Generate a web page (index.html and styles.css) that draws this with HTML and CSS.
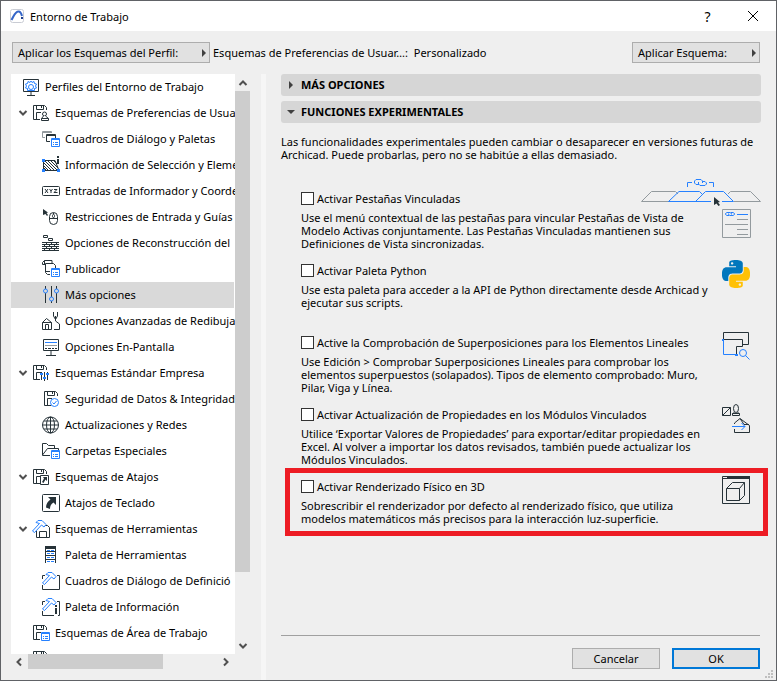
FILE: index.html
```html
<!DOCTYPE html>
<html lang="es">
<head>
<meta charset="utf-8">
<title>Entorno de Trabajo</title>
<link rel="stylesheet" href="styles.css">
</head>
<body>
<svg class="sprite" aria-hidden="true">
  <defs>
    <symbol id="floppy" viewBox="0 0 20 20">
      <path class="k" d="M8 16.5H1.500V2.500H12.500L14.500 4.500V7M4.500 2.500V6.500H11.500V2.500M9.500 3V5M4.500 16V9.500H9"/>
    </symbol>
    <symbol id="list-badge" viewBox="0 0 20 20">
      <path class="b w" d="M9.500 9.500H17.500V17.500H9.500Z"/>
      <path class="b" d="M9.500 10.500H17.500M11 13.500H12M13 13.500H16M11 15.500H12M13 15.500H16"/>
    </symbol>
    <symbol id="hammer" viewBox="0 0 20 20">
      <path class="b w" d="M4 3.500L6 1.500H10L14 5.500L12 8L9.500 6L2.500 13.500L.500 12L7.500 4.500Z"/>
    </symbol>
    <symbol id="chevron" viewBox="0 0 10 10">
      <path class="chev" d="M1.500 3L5 6.500L8.500 3"/>
    </symbol>
    <symbol id="wedge" viewBox="0 0 8 8"><path d="M2 0L6 4L2 8Z"/></symbol>
  </defs>
</svg>

<header class="titlebar">
  <svg class="app-icon" width="14" height="14" viewBox="0 0 14 14">
    <rect class="app-frame" x=".5" y=".5" width="13" height="13" rx="2"/>
    <path class="app-arc" d="M1.500 11C4 7 5 2 9 2.500C11 3 11.500 5 12 7"/>
    <rect class="app-dot" x="11" y="8" width="2" height="2"/>
  </svg>
  <h1>Entorno de Trabajo</h1>
  <button class="win-btn" type="button" aria-label="Ayuda">?</button>
  <button class="win-btn" type="button" aria-label="Cerrar">
    <svg width="12" height="12" viewBox="0 0 12 12"><path class="close" d="M1 1L11 11M11 1L1 11"/></svg>
  </button>
</header>

<div class="toolbar">
  <button class="btn menu-btn profile-btn" type="button">Aplicar los Esquemas del Perfil:<svg width="8" height="8"><use href="#wedge"/></svg></button>
  <span class="scheme">Esquemas de Preferencias de Usuar…:&nbsp; Personalizado</span>
  <button class="btn menu-btn scheme-btn" type="button">Aplicar Esquema:<svg width="8" height="8"><use href="#wedge"/></svg></button>
</div>

<main class="main">
  <nav class="nav" aria-label="Esquemas">
    <ul class="tree">
      <li class="row l0"><svg class="ic" viewBox="0 0 20 20"><path class="k" d="M1.500 2.500H16.500V14.500H1.500ZM9 15V18M5 18.500H13"/><path class="b w" d="M9 4L10 5.500L12 4.500L12.500 6.500L14.500 7L13.500 9L14.500 11L12.500 11.500V13.500H5.500V11.500L3.500 11L4.500 9L3.500 7L5.500 6.500L6 4.500L8 5.500Z"/><circle class="b" cx="9" cy="10" r="2.500"/></svg>Perfiles del Entorno de Trabajo</li>
      <li class="row l1"><svg class="tw"><use href="#chevron"/></svg><svg class="ic" viewBox="0 0 20 20"><use href="#floppy"/><circle class="k w" cx="12.500" cy="11" r="2"/><path class="k w" d="M11.500 13L9.500 15.500V17.500H16.500V15.500L13.500 13M9.500 15.500H16.500"/></svg>Esquemas de Preferencias de Usuar</li>
      <li class="row l2"><svg class="ic" viewBox="0 0 20 20"><path class="g" d="M3 8.500H.500V2.500H9.500V4M.500 3.500H9"/><path class="k" d="M8 12.500H4.500V5.500H13.500V9M4.500 6.500H13"/><use href="#list-badge"/></svg>Cuadros de Diálogo y Paletas</li>
      <li class="row l2"><svg class="ic" viewBox="0 0 20 20"><path class="k" d="M1.500 5.500H13L17 15.500H1.500ZM2 11L6 15M2 8L9 15M3 6L12 15M6 6L15 15M9 6L16 13M12 6L15 9M2 13L4 15"/><path class="kf" d="M15 1h2v2h-2zM15 4h2v5h-2z"/><path class="bf" d="M0 4h3v3H0zM0 14h3v3H0zM15 14h3v3h-3z"/></svg>Información de Selección y Eleme</li>
      <li class="row l2"><svg class="ic" viewBox="0 0 20 20"><rect class="k" x=".5" y="5.500" width="17" height="9" rx="1"/><path class="k" d="M3 8L6 12M6 8L3 12M7.500 8L9 10L10.500 8M9 10V12M12 8.500H15L12 11.500H15.500"/></svg>Entradas de Informador y Coorde</li>
      <li class="row l2"><svg class="ic" viewBox="0 0 20 20"><path class="kf" d="M1 2L6 5.500L4.500 6L6 8L5 9L3.500 7L1 8Z"/><rect class="k" x="7.500" y="5.500" width="8" height="12" rx="4"/><path class="k" d="M7.500 11.500H15.500M11.500 6V7M11.500 11V12"/><rect class="k" x="10.500" y="7.500" width="2" height="3" rx="1"/></svg>Restricciones de Entrada y Guías</li>
      <li class="row l2"><svg class="ic" viewBox="0 0 20 20"><path class="k" d="M1.500 2.500H5.500V4.500H1.500ZM6.500 5.500H10.500V7.500H6.500ZM0 9.500H17M0 11.500H17M0 13.500H17M0 15.500H17M0 17.500H17M4.500 9.500V11.500M9.500 9.500V11.500M14.500 9.500V11.500M2.500 11.500V13.500M7.500 11.500V13.500M12.500 11.500V13.500M4.500 13.500V15.500M9.500 13.500V15.500M14.500 13.500V15.500M2.500 15.500V17.500M7.500 15.500V17.500M12.500 15.500V17.500"/></svg>Opciones de Reconstrucción del</li>
      <li class="row l2"><svg class="ic" viewBox="0 0 20 20"><path class="k" d="M10 4.500V1.500H2.500L.500 3.500V5.500H3M2.500 1.500V5M8 15.500H5.500L3.500 13.500V4.500H11.500L13.500 6.500V9M3.500 12.500H8"/><use href="#list-badge"/></svg>Publicador</li>
      <li class="row l2 selected" aria-current="true"><svg class="ic" viewBox="0 0 20 20"><path class="k" d="M3.500 1V18M9.500 1V18M14.500 1V18"/><circle class="b s" cx="3.500" cy="6" r="2"/><circle class="b s" cx="9.500" cy="14" r="2"/><circle class="b s" cx="14.500" cy="6" r="2"/></svg>Más opciones</li>
      <li class="row l2"><svg class="ic" viewBox="0 0 20 20"><path class="k" d="M.500 18.500V11.500L4.500 7.500L9.500 11.500V18.500ZM3.500 18V13.500H6.500V18M.500 11.500H9.500M11.500 1V5L13.500 8.500L15.500 5V1M13.500 5V10L17.500 13V18.500H12"/></svg>Opciones Avanzadas de Redibuja</li>
      <li class="row l2"><svg class="ic" viewBox="0 0 20 20"><path class="k" d="M1.500 2.500H16.500V13.500H1.500ZM9 14V18M4 18.500H14M3 11.500H5M6 11.500H9M10 11.500H12M13 11.500H15"/><path class="b" d="M3 5.500H15"/><path class="g" d="M3 8.500H15"/></svg>Opciones En-Pantalla</li>
      <li class="row l1"><svg class="tw"><use href="#chevron"/></svg><svg class="ic" viewBox="0 0 20 20"><use href="#floppy"/><path class="k" d="M9.500 9V17M12.500 9V18M15.500 9V17"/><path class="bf" d="M8 10h3v2H8zM11 14h3v2h-3zM14 10h3v2h-3z"/></svg>Esquemas Estándar Empresa</li>
      <li class="row l2"><svg class="ic" viewBox="0 0 20 20"><use href="#floppy" x="1"/><circle class="b w" cx="12.500" cy="13.500" r="4"/><path class="b" d="M10.500 13.500L12 15L14.500 12"/></svg>Seguridad de Datos &amp; Integridad</li>
      <li class="row l2"><svg class="ic" viewBox="0 0 20 20"><circle class="k" cx="8.500" cy="10" r="8"/><ellipse class="k" cx="8.500" cy="10" rx="4" ry="8"/><path class="k" d="M8.500 2V18M.500 10H16.500M2 6H15M2 14H15"/></svg>Actualizaciones y Redes</li>
      <li class="row l2"><svg class="ic" viewBox="0 0 20 20"><path class="k" d="M8 14.500H.500V2.500H4.500L6.500 4.500H12.500V7M.500 14L5.500 7.500H16.500V9"/><use href="#list-badge"/></svg>Carpetas Especiales</li>
      <li class="row l1"><svg class="tw"><use href="#chevron"/></svg><svg class="ic" viewBox="0 0 20 20"><use href="#floppy"/><path class="k w" d="M8.500 8.500H16.500V17.500H8.500Z"/><path class="kf" d="M11 10H15V14L13.500 12.500L11.500 16L10 15L12 11.500Z"/></svg>Esquemas de Atajos</li>
      <li class="row l2"><svg class="ic" viewBox="0 0 20 20"><rect class="k" x=".5" y="1.500" width="17" height="17" rx="1"/><path class="kf" d="M6 4H14V12L11.500 9.500C9 11 8 13 8 16L4 14.500C4 11 6 8 8.500 6.500Z"/></svg>Atajos de Teclado</li>
      <li class="row l1"><svg class="tw"><use href="#chevron"/></svg><svg class="ic" viewBox="0 0 20 20"><path class="k" d="M4.500 12V18.500H17.500V8.500L15.500 6.500H13M7.500 18V12.500H14.500V18"/><use href="#hammer"/></svg>Esquemas de Herramientas</li>
      <li class="row l2"><svg class="ic" viewBox="0 0 20 20"><path class="kf" d="M3 1h11v3H3z"/><path class="k" d="M3.500 2V18M13.500 2V18M3 6.500H14M3 10.500H14M3 14.500H14"/><path class="b" d="M5 5.500H8M9 5.500H12M5 8.500H8M9 8.500H12M5 12.500H8M9 12.500H12M5 16.500H8M9 16.500H12"/></svg>Paleta de Herramientas</li>
      <li class="row l2"><svg class="ic" viewBox="0 0 20 20"><path class="k" d="M3 4.500H.500V8M.500 14V18.500H17.500V4.500H15"/><use href="#hammer"/></svg>Cuadros de Diálogo de Definició</li>
      <li class="row l2"><svg class="ic" viewBox="0 0 20 20"><path class="k" d="M3 4.500H.500V8M.500 14V18.500H12M16 18.500H17.500V4.500H15"/><use href="#hammer"/><path class="kf" d="M13 8h2v2h-2zM13 11h2v6h-2z"/></svg>Paleta de Información</li>
      <li class="row l1"><span class="tw"></span><svg class="ic" viewBox="0 0 20 20"><use href="#floppy"/><use href="#list-badge"/></svg>Esquemas de Área de Trabajo</li>
      <li class="row l1"><span class="tw"></span><svg class="ic" viewBox="0 0 20 20"><use href="#floppy"/></svg></li>
    </ul>
    <div class="vbar">
      <svg class="arrow up"><use href="#chevron"/></svg>
      <div class="vthumb"></div>
      <svg class="arrow down"><use href="#chevron"/></svg>
    </div>
    <div class="hbar">
      <svg class="arrow left"><use href="#chevron"/></svg>
      <div class="hthumb"></div>
      <svg class="arrow right"><use href="#chevron"/></svg>
    </div>
  </nav>
  <div class="splitter"></div>
  <section class="panel">
    <button class="section-head" type="button" aria-expanded="false"><svg width="8" height="8"><use href="#wedge"/></svg>MÁS OPCIONES</button>
    <button class="section-head" type="button" aria-expanded="true"><svg class="open" width="8" height="8"><use href="#wedge"/></svg>FUNCIONES EXPERIMENTALES</button>
    <p class="intro">Las funcionalidades experimentales pueden cambiar o desaparecer en versiones futuras de<br>Archicad. Puede probarlas, pero no se habitúe a ellas demasiado.</p>

    <div class="options">
      <div class="option">
        <div class="text">
          <label><input type="checkbox">Activar Pestañas Vinculadas</label>
          <p>Use el menú contextual de las pestañas para vincular Pestañas de Vista de<br>Modelo Activas conjuntamente. Las Pestañas Vinculadas mantienen sus<br>Definiciones de Vista sincronizadas.</p>
        </div>
        <div class="art wide">
          <svg width="120" height="61" viewBox="0 0 120 61">
            <path class="g" d="M28 23.500H.500L10.500 13.500H34.500L37 16M87 16L89.500 13.500H109.500L119.500 23.500H93M81.500 31.500H109.500V59.500H81.500ZM96 41.500H107M84 46.500H107M96 51.500H107M96 56.500H107"/>
            <path class="b" d="M70 23.500H27.500L38 13.500H58.500L62 17M54.500 23.500L64.500 13.500H82.500L92.500 23.500H81M46.500 9V4.500H51M68 4.500H72.500V9M96 36.500H107"/>
            <path class="b" d="M58 6.500H55L53.500 5V3L55 1.500H60L61.500 3V5M61 3.500H64L65.500 5V6L64 7.500H59L57.500 6V4M88 37.500H86L84.500 36.500V35.500L86 34.500H89L90.500 35.500V36.500M90 34.500H92L93.500 35.500V36.500L92 37.500H89L87.500 36.500V35.500"/>
            <path class="kf" d="M73 19L79 24L77 24.500L79 27L77.500 28L75.500 25.500L73 27Z"/>
          </svg>
        </div>
      </div>
      <div class="option">
        <div class="text">
          <label><input type="checkbox">Activar Paleta Python</label>
          <p>Use esta paleta para acceder a la API de Python directamente desde Archicad y<br>ejecutar sus scripts.</p>
        </div>
        <div class="art">
          <svg width="28" height="28" viewBox="0 0 24 24">
            <defs>
              <path id="snake" d="M14.250.180l.9.200.730.260.590.300.450.320.340.340.250.340.160.330.100.300.040.260.020.200-.010.130V8.500l-.050.630-.130.550-.210.460-.260.380-.300.310-.330.250-.350.190-.350.140-.330.100-.300.070-.260.040-.210.020H8.770l-.690.050-.590.140-.500.220-.410.270-.330.320-.270.350-.200.360-.150.370-.100.350-.070.320-.040.270-.020.210v3.060H3.170l-.210-.030-.280-.070-.320-.120-.350-.180-.360-.260-.360-.360-.350-.460-.320-.590-.280-.730-.210-.880-.140-1.050-.050-1.230.060-1.220.160-1.040.240-.870.320-.710.360-.570.400-.440.420-.330.420-.240.400-.160.360-.100.320-.050.240-.010h.160l.060.010h8.160v-.830H6.180l-.010-2.750-.020-.370.050-.340.110-.310.170-.280.250-.260.310-.230.380-.200.440-.180.510-.150.580-.120.640-.100.710-.060.770-.040.840-.020 1.270.050zm-6.300 1.980l-.230.330-.080.410.080.410.230.340.330.220.410.090.410-.090.330-.220.230-.340.080-.410-.080-.410-.230-.330-.330-.220-.410-.090-.410.090z"/>
            </defs>
            <use href="#snake" fill="#0277bd"/>
            <use href="#snake" fill="#ffc107" transform="rotate(180 12 12)"/>
          </svg>
        </div>
      </div>
      <div class="option">
        <div class="text">
          <label><input type="checkbox">Active la Comprobación de Superposiciones para los Elementos Lineales</label>
          <p>Use Edición &gt; Comprobar Superposiciones Lineales para comprobar los<br>elementos superpuestos (solapados). Tipos de elemento comprobado: Muro,<br>Pilar, Viga y Línea.</p>
        </div>
        <div class="art">
          <svg width="28" height="28" viewBox="0 0 28 28">
            <path class="k" d="M1.500 7.500V.500H26.500V12.500H20.500M1.500 7.500H20.500V14.500H14.500V22"/>
            <path class="b" d="M1.500 8V22.500H14"/>
            <path class="bf" d="M0 7h2v2H0zM13 22h3v2h-3z"/>
            <circle class="b" cx="21" cy="21" r="3.500"/><path class="b" d="M23.500 23.500L27.500 27.500"/>
          </svg>
        </div>
      </div>
      <div class="option">
        <div class="text">
          <label><input type="checkbox">Activar Actualización de Propiedades en los Módulos Vinculados</label>
          <p>Utilice ‘Exportar Valores de Propiedades’ para exportar/editar propiedades en<br>Excel. Al volver a importar los datos revisados, también puede actualizar los<br>Módulos Vinculados.</p>
        </div>
        <div class="art">
          <svg width="28" height="29" viewBox="0 0 28 29">
            <path class="k" d="M.500 3.500H8.500V11.500H.500ZM.500 11.500L8.500 3.500M12.500 8.500L10.500 9.500V11.500H17.500V9.500L15.500 8.500M10.500 9.500H17.500"/>
            <ellipse class="k" cx="14" cy="4.500" rx="2.500" ry="4"/>
            <path class="k" d="M12.500 25V28.500H27.500V21.500L18 14.500L12.500 19V20M18 14.500L22 20.500H27"/>
            <path class="b" d="M10 22.500H23M19.500 19L23 22.500L19.500 26"/>
          </svg>
        </div>
      </div>
      <div class="option marked">
        <div class="text">
          <label><input type="checkbox">Activar Renderizado Físico en 3D</label>
          <p>Sobrescribir el renderizador por defecto al renderizado físico, que utiliza<br>modelos matemáticos más precisos para la interacción luz-superficie.</p>
        </div>
        <div class="art">
          <svg width="28" height="28" viewBox="0 0 28 28">
            <path class="k" d="M.500.500H27.500V27.500H.500ZM4.500 12.500H17.500V24.500H4.500ZM4.500 12.500L10.500 6.500H22.500V19.500L17.500 24.500M17.500 12.500L22.500 6.500"/>
            <path class="kf" d="M5 0H28V3H0V2H5Z"/>
          </svg>
        </div>
      </div>
    </div>

    <footer class="actions">
      <button class="btn" type="button">Cancelar</button>
      <button class="btn primary" type="submit">OK</button>
    </footer>
  </section>
</main>
<svg class="grip" width="9" height="9" viewBox="0 0 9 9" aria-hidden="true"><path d="M6 0h2v2H6zM3 3h2v2H3zM6 3h2v2H6zM0 6h2v2H0zM3 6h2v2H3zM6 6h2v2H6z"/></svg>
</body>
</html>
```
FILE: styles.css
```css
* { box-sizing: border-box; }

body {
  margin: 0;
  height: 100vh;
  display: flex;
  flex-direction: column;
  position: relative;
  border: 1px solid #606266;
  background: #efefef;
  color: #000;
  font: 11px/13px "Noto Sans", "Open Sans", sans-serif;
}

h1, p, ul { margin: 0; padding: 0; }
button { font: inherit; color: inherit; cursor: pointer; }

.sprite { position: absolute; width: 0; height: 0; }
.k, .b, .g { fill: none; stroke-width: 1; }
.k { stroke: #263238; }
.b { stroke: #2681ff; }
.g { stroke: #939a9e; }
.w { fill: #fff; }
.s { fill: #d9d9d9; }
.kf { fill: #263238; }
.bf { fill: #2681ff; }
.chev { fill: none; stroke: #505050; stroke-width: 2; }
use[href="#wedge"] { fill: #404040; }

.titlebar {
  flex: none;
  display: flex;
  align-items: center;
  height: 30px;
  padding: 0 1px 0 9px;
  background: #fff;
}
.titlebar h1 {
  flex: 1;
  margin-left: 6px;
  font-size: 11px;
  font-weight: 400;
}
.app-frame { fill: #fff; stroke: #c9ccd4; }
.app-arc { fill: none; stroke: #3465c8; stroke-width: 2; }
.app-dot { fill: #1c3d8c; }
.win-btn {
  width: 45px;
  height: 30px;
  padding: 0;
  border: 0;
  background: none;
  font-size: 14px;
  display: grid;
  place-items: center;
}
.close { stroke: #000; fill: none; }

.toolbar {
  flex: none;
  display: flex;
  align-items: center;
  gap: 3px;
  padding: 11px 16px 11px 11px;
}
.btn {
  height: 21px;
  padding: 0 5px;
  border: 1px solid #adadad;
  background: #e1e1e1;
}
.menu-btn {
  display: flex;
  align-items: center;
  justify-content: space-between;
  padding: 0 1px 0 5px;
}
.profile-btn { width: 198px; }
.scheme-btn { width: 128px; }
.scheme { flex: 1; white-space: nowrap; }

.main {
  flex: 1;
  min-height: 0;
  display: flex;
  padding: 0 15px 11px 10px;
}

.nav {
  flex: none;
  display: grid;
  grid-template: minmax(0, 1fr) 15px / 224px 15px;
}
.tree {
  overflow: hidden;
  list-style: none;
  background: #fff;
}
.row {
  display: flex;
  align-items: center;
  height: 26px;
  margin-right: 1px;
  padding-bottom: 1px;
  white-space: nowrap;
}
.row.selected { background: #d9d9d9; }
.l0 { padding-left: 11px; }
.l1 { padding-left: 7px; }
.l2 { padding-left: 31px; }
.ic { flex: none; width: 20px; height: 20px; margin: 1px 3px 0 0; }
.tw { flex: none; width: 10px; height: 10px; margin: 1px 4px 0 0; }

.vbar, .hbar { display: flex; align-items: center; }
.vbar { flex-direction: column; }
.vthumb { width: 15px; height: 83%; margin-bottom: auto; background: #cdcdcd; }
.hthumb { width: 135px; height: 15px; margin-right: auto; background: #cdcdcd; }
.arrow { flex: none; width: 10px; height: 10px; margin: 4px 3px 3px; }
.hbar .arrow { margin: 3px 4px 3px 3px; }
.up { transform: rotate(180deg); }
.left { transform: rotate(90deg); }
.right { transform: rotate(-90deg); }

.splitter { flex: none; width: 5px; margin: 0 15px -11px 11px; background: #f6f6f6; }

.panel {
  flex: 1;
  min-width: 0;
  display: flex;
  flex-direction: column;
}
.section-head {
  flex: none;
  display: flex;
  align-items: center;
  gap: 6px;
  height: 22px;
  margin-bottom: 5px;
  padding: 0 6px 1px;
  border: 0;
  border-radius: 3px;
  background: #d6d6d6;
  font-weight: 700;
}
.section-head svg { margin-top: 1px; }
.section-head .open { transform: rotate(90deg); }
.intro { margin-top: 7px; white-space: nowrap; }

.options { margin-top: 17px; }
.option {
  position: relative;
  display: flex;
  min-height: 72px;
  padding: 12px 0 0 20px;
}
.option .text { flex: 1; min-width: 0; white-space: nowrap; }
.option label { display: flex; align-items: center; gap: 3px; height: 17px; }
.option input {
  appearance: none;
  width: 13px;
  height: 13px;
  margin: 0;
  border: 1px solid #333;
  background: #fff;
}
.option p { margin-top: 4px; }
.art {
  flex: none;
  display: flex;
  justify-content: flex-end;
  width: 39px;
  height: 28px;
  margin-top: -2px;
  padding-right: 11px;
}
.art svg { flex: none; }
.art.wide { margin-top: -12px; padding-right: 0; }
.marked::after {
  content: "";
  position: absolute;
  inset: 2px -7px 2px 4px;
  border: 5px solid #ed1c24;
  pointer-events: none;
}

.actions {
  display: flex;
  justify-content: flex-end;
  gap: 12px;
  margin: auto 1px 0 0;
  padding-top: 12px;
  border-top: 1px solid #a0a0a0;
}
.actions .btn { width: 88px; }
.actions .primary { border: 2px solid #0078d7; }

.grip { position: absolute; right: 2px; bottom: 1px; fill: #bfbfbf; }
```
